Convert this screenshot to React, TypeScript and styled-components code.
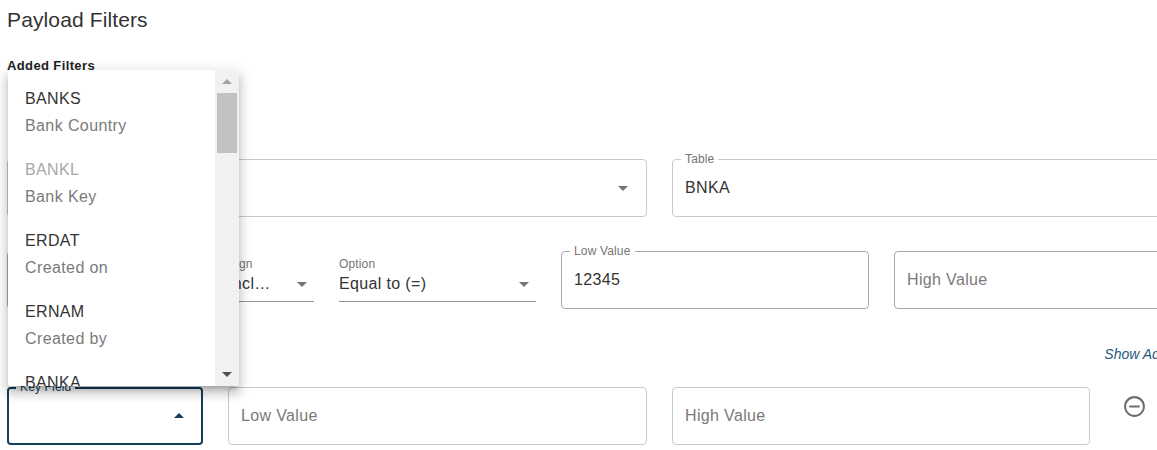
import React from "react";
import styled, { createGlobalStyle } from "styled-components";

const GlobalStyle = createGlobalStyle`
  html, body { margin: 0; padding: 0; overflow: hidden; background: #fff; }
  body { font-family: "Liberation Sans", Arial, sans-serif; color: #333; }
  * { box-sizing: border-box; }
`;

const Page = styled.div`
  position: relative;
  width: 1400px;
  height: 450px;
  padding: 8px 0 0 7px;
`;

const Title = styled.h1`
  margin: 0;
  font-size: 21px;
  line-height: 24px;
  font-weight: 400;
  letter-spacing: 0.12px;
  color: #333;
`;

const SectionLabel = styled.h2`
  margin: 26px 0 0;
  font-size: 13px;
  line-height: 16px;
  font-weight: 700;
  letter-spacing: 0.38px;
  color: #1f1f1f;
`;

const Form = styled.div`
  margin-top: 85px;
  width: 1240px;
  display: flex;
  flex-direction: column;
`;

const Row = styled.div<{ $mt?: number }>`
  display: flex;
  gap: 25px;
  align-items: flex-start;
  margin-top: ${(p) => p.$mt ?? 0}px;
`;

type Tone = "light" | "mid" | "focus";

const Outlined = styled.div<{ $w: number; $tone?: Tone }>`
  position: relative;
  flex: 0 0 ${(p) => p.$w}px;
  min-width: 0;
  height: 58px;
  border: ${(p) =>
    p.$tone === "focus"
      ? "2px solid #163f5c"
      : `1px solid ${p.$tone === "mid" ? "#a9a9a9" : "#c9c9c9"}`};
  border-radius: 4px;
  display: flex;
  align-items: center;
  padding: 0 ${(p) => (p.$tone === "focus" ? 10 : 11)}px 0
    ${(p) => (p.$tone === "focus" ? 11 : 12)}px;
  font-size: 16px;
  background: #fff;
`;

const FloatLabel = styled.span<{ $focus?: boolean }>`
  position: absolute;
  top: ${(p) => (p.$focus ? -10 : -9)}px;
  left: ${(p) => (p.$focus ? 7 : 8)}px;
  padding: 0 4px;
  background: #fff;
  font-size: 12px;
  line-height: 16px;
  letter-spacing: 0.15px;
  color: ${(p) => (p.$focus ? "#163f5c" : "#757575")};
`;

const Value = styled.span<{ $placeholder?: boolean; $gap?: number }>`
  flex: 1;
  min-width: 0;
  margin-right: ${(p) => p.$gap ?? 0}px;
  font-size: 16px;
  line-height: 24px;
  letter-spacing: 0.35px;
  white-space: nowrap;
  overflow: hidden;
  text-overflow: ellipsis;
  color: ${(p) => (p.$placeholder ? "#7a7a7a" : "#333")};
`;

const StdSelect = styled.div<{ $w: number }>`
  flex: 0 0 ${(p) => p.$w}px;
  width: ${(p) => p.$w}px;
  min-width: 0;
  display: flex;
  flex-direction: column;
  padding-top: 5px;
`;

const StdLabel = styled.span`
  font-size: 12px;
  line-height: 16px;
  letter-spacing: 0.15px;
  color: #757575;
`;

const StdControl = styled.div`
  display: flex;
  align-items: center;
  min-width: 0;
  height: 30px;
  padding-bottom: 5px;
  border-bottom: 1px solid #969696;
`;

const LinkRow = styled.div`
  margin-top: 35px;
  display: flex;
  justify-content: flex-end;
`;

const Link = styled.a`
  font-size: 14px;
  line-height: 20px;
  font-style: italic;
  color: #245a7c;
  text-decoration: none;
  white-space: nowrap;
`;

const IconButton = styled.button`
  flex: 0 0 25px;
  width: 25px;
  height: 25px;
  margin: 7px 0 0 7px;
  padding: 0;
  border: 0;
  background: none;
  display: flex;
  color: #6f6f6f;
`;

const Menu = styled.div`
  position: absolute;
  left: 8px;
  top: 70px;
  width: 231px;
  height: 316px;
  background: #fff;
  display: flex;
  overflow: hidden;
  border-radius: 2px;
  box-shadow: 0 5px 5px -3px rgba(0, 0, 0, 0.2),
    0 8px 10px 1px rgba(0, 0, 0, 0.14), 0 3px 14px 2px rgba(0, 0, 0, 0.12);
`;

const MenuList = styled.ul`
  flex: 1;
  margin: 0;
  padding: 8px 0 0;
  list-style: none;
  overflow: hidden;
`;

const MenuItem = styled.li`
  height: 71px;
  padding: 7px 17px 10px;
  display: flex;
  flex-direction: column;
`;

const Primary = styled.span<{ $muted?: boolean }>`
  font-size: 16px;
  line-height: 27px;
  letter-spacing: 0.35px;
  color: ${(p) => (p.$muted ? "#a8a8a8" : "#333")};
`;

const Secondary = styled.span`
  font-size: 16px;
  line-height: 27px;
  letter-spacing: 0.4px;
  color: #7a7a7a;
`;

const Track = styled.div`
  flex: 0 0 24px;
  background: #f1f1f1;
  display: flex;
  flex-direction: column;
  align-items: center;
`;

const TrackButton = styled.div`
  height: 23px;
  width: 100%;
  display: flex;
  align-items: center;
  justify-content: center;
`;

const Thumb = styled.div`
  width: 20px;
  height: 60px;
  background: #c1c1c1;
`;

const TrackSpacer = styled.div`
  flex: 1;
`;

const Caret = ({ up, color }: { up?: boolean; color: string }) => (
  <svg width="24" height="24" viewBox="0 0 24 24" style={{ flex: "0 0 24px" }}>
    <path d={up ? "M7 14l5-5 5 5z" : "M7 10l5 5 5-5z"} fill={color} />
  </svg>
);

const ScrollArrow = ({ up, color }: { up?: boolean; color: string }) => (
  <svg width="10" height="5" viewBox="0 0 10 5">
    <path d={up ? "M0 5L5 0L10 5Z" : "M0 0L10 0L5 5Z"} fill={color} />
  </svg>
);

const RemoveCircle = () => (
  <svg width="25" height="25" viewBox="0 0 24 24">
    <path
      fill="currentColor"
      d="M7 11v2h10v-2H7zm5-9C6.48 2 2 6.48 2 12s4.48 10 10 10 10-4.48 10-10S17.52 2 12 2zm0 18c-4.41 0-8-3.59-8-8s3.59-8 8-8 8 3.59 8 8-3.59 8-8 8z"
    />
  </svg>
);

const items = [
  { key: "BANKS", text: "Bank Country" },
  { key: "BANKL", text: "Bank Key", muted: true },
  { key: "ERDAT", text: "Created on" },
  { key: "ERNAM", text: "Created by" },
  { key: "BANKA", text: "Name of bank" },
];

export default function App() {
  return (
    <>
      <GlobalStyle />
      <Page>
        <Title>Payload Filters</Title>
        <SectionLabel>Added Filters</SectionLabel>
        <Form>
          <Row>
            <Outlined $w={640}>
              <Value />
              <Caret color="#757575" />
            </Outlined>
            <Outlined $w={640}>
              <FloatLabel>Table</FloatLabel>
              <Value>BNKA</Value>
            </Outlined>
          </Row>
          <Row $mt={34}>
            <Outlined $w={196} $tone="mid">
              <FloatLabel>Key Field</FloatLabel>
              <Value>BANKL</Value>
              <Caret color="#757575" />
            </Outlined>
            <StdSelect $w={86}>
              <StdLabel>Sign</StdLabel>
              <StdControl>
                <Value $gap={16}>Inclusive</Value>
                <Caret color="#757575" />
              </StdControl>
            </StdSelect>
            <StdSelect $w={197}>
              <StdLabel>Option</StdLabel>
              <StdControl>
                <Value>Equal to (=)</Value>
                <Caret color="#757575" />
              </StdControl>
            </StdSelect>
            <Outlined $w={308} $tone="mid">
              <FloatLabel>Low Value</FloatLabel>
              <Value>12345</Value>
            </Outlined>
            <Outlined $w={308} $tone="mid">
              <Value $placeholder>High Value</Value>
            </Outlined>
          </Row>
          <LinkRow>
            <Link href="#">Show Advanced Filters</Link>
          </LinkRow>
          <Row $mt={23}>
            <Outlined $w={196} $tone="focus">
              <FloatLabel $focus>Key Field</FloatLabel>
              <Value />
              <Caret up color="#163f5c" />
            </Outlined>
            <Outlined $w={419}>
              <Value $placeholder>Low Value</Value>
            </Outlined>
            <Outlined $w={418}>
              <Value $placeholder>High Value</Value>
            </Outlined>
            <IconButton aria-label="Remove filter">
              <RemoveCircle />
            </IconButton>
          </Row>
        </Form>
        <Menu>
          <MenuList>
            {items.map((it) => (
              <MenuItem key={it.key}>
                <Primary $muted={it.muted}>{it.key}</Primary>
                <Secondary>{it.text}</Secondary>
              </MenuItem>
            ))}
          </MenuList>
          <Track>
            <TrackButton>
              <ScrollArrow up color="#a3a3a3" />
            </TrackButton>
            <Thumb />
            <TrackSpacer />
            <TrackButton>
              <ScrollArrow color="#505050" />
            </TrackButton>
          </Track>
        </Menu>
      </Page>
    </>
  );
}
